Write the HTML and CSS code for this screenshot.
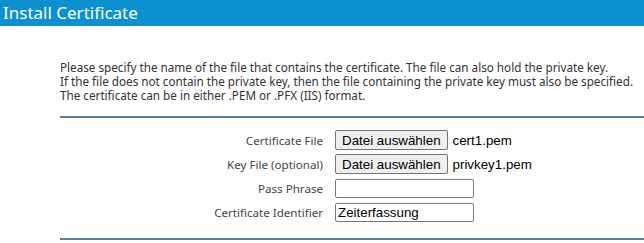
FILE: index.html
```html
<!DOCTYPE html>
<html>
<head>
<meta charset="utf-8">
<link rel="stylesheet" href="styles.css">
</head>
<body>
<div class="header">Install Certificate</div>
<div class="content">
  <p class="intro">Please specify the name of the file that contains the certificate. The file can also hold the private key.<br>If the file does not contain the private key, then the file containing the private key must also be specified.<br>The certificate can be in either .PEM or .PFX (IIS) format.</p>
  <hr class="rule">
  <div class="form">
    <label class="lbl">Certificate File</label>
    <div class="ctl"><button class="filebtn">Datei auswählen</button><span class="fname">cert1.pem</span></div>
    <label class="lbl">Key File (optional)</label>
    <div class="ctl"><button class="filebtn">Datei auswählen</button><span class="fname">privkey1.pem</span></div>
    <label class="lbl">Pass Phrase</label>
    <div class="ctl"><input class="txt" type="password"></div>
    <label class="lbl">Certificate Identifier</label>
    <div class="ctl"><input class="txt" type="text" value="Zeiterfassung"></div>
  </div>
  <hr class="rule">
</div>
</body>
</html>
```
FILE: styles.css
```css
html, body {
  margin: 0;
  padding: 0;
  background: #fff;
}
body {
  font-family: "Noto Sans", "Open Sans", sans-serif;
  color: #333;
}
.header {
  height: 26px;
  background: #0c90d0;
  color: #fff;
  font-size: 17px;
  line-height: 26px;
  padding-left: 3px;
  box-sizing: border-box;
}
.content {
  padding-left: 60px;
}
.intro {
  margin: 34px 0 0 0;
  font-size: 11.7px;
  line-height: 14px;
  color: #333;
}
.rule {
  margin: 0;
  border: 0;
  height: 2px;
  background: #56809c;
}
.intro + .rule {
  margin-top: 14px;
}
.form {
  display: grid;
  grid-template-columns: 263px auto;
  column-gap: 11px;
  grid-template-rows: 24px 24px 24px 25px;
  padding: 10px 0 13px 0;
}
.lbl {
  font-size: 11.6px;
  color: #444;
  text-align: right;
  align-self: center;
}
.ctl {
  display: flex;
  align-items: center;
}
.filebtn {
  font-family: Arial, "Liberation Sans", sans-serif;
  font-size: 13.33px;
  height: 20px;
  padding: 0 6px;
  border: 1px solid #767676;
  border-radius: 2px;
  background: #efefef;
  color: #000;
  margin: 0 0 0 1px;
}
.fname {
  font-family: Arial, "Liberation Sans", sans-serif;
  font-size: 13.33px;
  color: #000;
  margin-left: 5px;
}
.txt {
  font-family: Arial, "Liberation Sans", sans-serif;
  font-size: 13.33px;
  width: 139px;
  height: 19px;
  box-sizing: border-box;
  border: 1px solid #767676;
  border-radius: 2px;
  padding: 0 2px;
  margin: 0 0 0 1px;
  color: #000;
}
```
